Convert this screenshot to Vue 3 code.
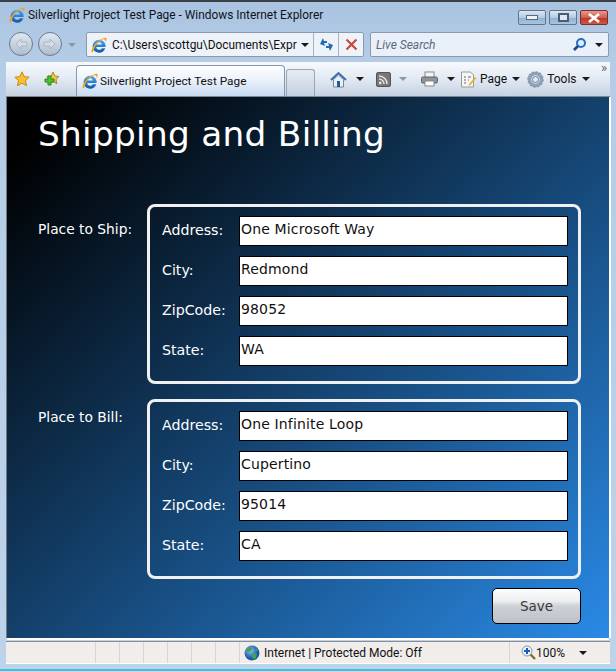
<script setup>
const groups = [
  { label: 'Place to Ship:', kind: 'ship', rows: [['Address:', 'One Microsoft Way'], ['City:', 'Redmond'], ['ZipCode:', '98052'], ['State:', 'WA']] },
  { label: 'Place to Bill:', kind: 'bill', rows: [['Address:', 'One Infinite Loop'], ['City:', 'Cupertino'], ['ZipCode:', '95014'], ['State:', 'CA']] },
]
const cells = [24, 24, 24, 24, 24, 24]
</script>

<template>
  <div class="window">
    <svg width="0" height="0" class="defs">
      <defs>
        <linearGradient id="ieblue" x1="0" y1="0" x2="0" y2="1"><stop offset="0" stop-color="#4aa8ee"/><stop offset="1" stop-color="#0c58b0"/></linearGradient>
        <symbol id="ie" viewBox="0 0 16 16">
          <path d="M14.600 10H5.200a3 3 0 0 0 5.600 1.300h3.500A6.500 6.500 0 1 1 14.600 8.500zM5.200 7.600h5.700a2.900 2.900 0 0 0-5.700 0z" fill="url(#ieblue)" fill-rule="evenodd"/>
          <path d="M.7 15.300C-.5 13.500 3 6.500 8.500 3.200 11.500 1.400 14.300.3 15.300 1.100c.7.600.4 2-.5 3.800-.3-1.300-1-2.300-2-2.800C8 4 3.200 9.500 2.800 13.500c-.8 1.500-1.600 2.200-2.100 1.800z" fill="#f2a21c"/>
        </symbol>
      </defs>
    </svg>

    <header class="titlebar">
      <svg class="ico16"><use href="#ie"/></svg>
      <span class="title">Silverlight Project Test Page - Windows Internet Explorer</span>
      <div class="winbtns">
        <button class="wb"><span class="min"></span></button>
        <button class="wb"><span class="max"></span></button>
        <button class="wb close">
          <svg width="14" height="10" viewBox="0 0 14 10"><path d="M2 1l10 8M12 1L2 9" stroke="#fff" stroke-width="2.600"/></svg>
        </button>
      </div>
    </header>

    <nav class="navrow">
      <div class="circle"><svg width="14" height="12" viewBox="0 0 14 12"><path d="M7 1L2 6l5 5V8h6V4H7z" fill="#d4dde8" stroke="#aab6c4"/></svg></div>
      <div class="circle second"><svg width="14" height="12" viewBox="0 0 14 12"><path d="M7 1l5 5-5 5V8H1V4h6z" fill="#d4dde8" stroke="#aab6c4"/></svg></div>
      <i class="tri grey navtri"></i>
      <div class="address">
        <svg class="ico16"><use href="#ie"/></svg>
        <span class="path">C:\Users\scottgu\Documents\Expr</span>
        <i class="tri"></i>
        <span class="seg first">
          <svg width="17" height="17" viewBox="0 0 17 17"><path d="M2 8l3-6 1 3h3v2H6l1 3zM15 9l-3 6-1-3H8v-2h3l-1-3z" fill="#2468b8"/></svg>
        </span>
        <span class="seg">
          <svg width="13" height="13" viewBox="0 0 13 13"><path d="M1.500 1.500l10 10M11.500 1.500l-10 10" stroke="#c8483c" stroke-width="2.200"/></svg>
        </span>
      </div>
      <div class="search">
        <span class="live">Live Search</span>
        <svg width="15" height="15" viewBox="0 0 15 15"><circle cx="9" cy="6" r="4" fill="#dcecfa" stroke="#2a6cc0" stroke-width="2"/><path d="M6 9l-4 4" stroke="#1c4a90" stroke-width="2.600"/></svg>
        <i class="tri searchtri"></i>
      </div>
    </nav>

    <div class="tabrow">
      <svg class="star" width="16" height="16" viewBox="0 0 16 16"><path d="M8 .8l2.200 4.800 5 .6-3.700 3.400 1 5.100L8 12.200l-4.500 2.500 1-5.100L.8 6.200l5-.6z" fill="#f8c030" stroke="#c88a18"/></svg>
      <svg class="star plus" width="16" height="16" viewBox="0 0 16 16"><path d="M9 1l1.800 4 4.200.5-3 2.900.8 4.300L9 10.500 5 12.700l.8-4.300-3-2.900L7.200 5z" fill="#f2c840" stroke="#b08a20"/><path d="M5 6v3H2v3h3v3h3v-3h3V9H8V6z" fill="#52c030" stroke="#2a8a18" transform="translate(-1 -1)"/></svg>
      <div class="tab">
        <svg class="ico16"><use href="#ie"/></svg>
        <span>Silverlight Project Test Page</span>
      </div>
      <div class="newtab"></div>
      <div class="tools">
        <svg class="t-home" width="17" height="17" viewBox="0 0 17 17"><path d="M1 9l7.500-7L16 9" fill="none" stroke="#3a6ea8" stroke-width="2"/><path d="M3.500 8.500L8.500 4l5 4.500V16h-10z" fill="#e8eef4" stroke="#7088a0"/><path d="M7 10h3v6H7z" fill="#2a5a94"/></svg>
        <i class="tri t-a1"></i>
        <svg class="t-rss" width="15" height="15" viewBox="0 0 15 15"><rect x=".5" y=".5" width="14" height="14" rx="1.500" fill="#77777a" stroke="#555"/><circle cx="4.200" cy="11" r="1.400" fill="#e4e4e4"/><path d="M3 7a5 5 0 0 1 5 5M3 4a8 8 0 0 1 8 8" fill="none" stroke="#e4e4e4" stroke-width="1.500"/></svg>
        <i class="tri grey t-a2"></i>
        <svg class="t-print" width="17" height="16" viewBox="0 0 17 16"><rect x="4" y="1" width="9" height="6" fill="#f4f4f4" stroke="#888"/><rect x=".5" y="6" width="16" height="6" rx="1.500" fill="#8c939b" stroke="#5c6268"/><rect x="4" y="10" width="9" height="5" fill="#fff" stroke="#888"/></svg>
        <i class="tri t-a3"></i>
        <svg class="t-page" width="17" height="17" viewBox="0 0 17 17"><path d="M1.500 1h9l3 3v12h-12z" fill="#f6f6f2" stroke="#9a9a94"/><path d="M4 6h2M4 9h2M4 12h2M8 6h3M8 9h1" stroke="#667" /><path d="M9 13l6-7 1.500 1-6 7-2 1z" fill="#e8b038"/></svg>
        <span class="t-label t-pagetext">Page</span>
        <i class="tri t-a4"></i>
        <svg class="t-gear" width="17" height="17" viewBox="0 0 17 17"><circle cx="8.500" cy="8.500" r="6" fill="none" stroke="#8ea2b8" stroke-width="3.500"/><circle cx="8.500" cy="8.500" r="7.300" fill="none" stroke="#8a9cb0" stroke-width="2" stroke-dasharray="2 1.800"/><circle cx="8.500" cy="8.500" r="3" fill="#dcecf8" stroke="#6a8098"/></svg>
        <span class="t-label t-toolstext">Tools</span>
        <i class="tri t-a5"></i>
        <span class="chev">»</span>
      </div>
    </div>

    <main class="page">
      <h1>Shipping and Billing</h1>
      <section v-for="g in groups" :key="g.label" class="group">
        <div class="grouplabel" :class="g.kind">{{ g.label }}</div>
        <div class="panel">
          <div v-for="r in g.rows" :key="r[0]" class="row">
            <label>{{ r[0] }}</label>
            <div class="input">{{ r[1] }}</div>
          </div>
        </div>
      </section>
      <div class="actions"><button class="save">Save</button></div>
    </main>

    <footer class="status">
      <div class="blank"></div>
      <div v-for="(w, i) in cells" :key="i" class="cell" :style="{ width: w + 'px' }"></div>
      <div class="zone">
        <svg width="16" height="16" viewBox="0 0 16 16"><defs><radialGradient id="gl" cx=".4" cy=".35"><stop offset="0" stop-color="#8cc0ec"/><stop offset="1" stop-color="#1c5aa8"/></radialGradient></defs><circle cx="8" cy="8" r="7.500" fill="url(#gl)"/><path d="M5 2l3 1-1 3-3 1-2-1zM9 8l4 1-1 4-3 1-1-3zM12 3l2 2-2 1z" fill="#3aa84a"/></svg>
        <span>Internet | Protected Mode: Off</span>
      </div>
      <div class="zoomzone">
        <svg width="15" height="15" viewBox="0 0 15 15"><path d="M9 9l5 5" stroke="#8a6a30" stroke-width="2.400"/><circle cx="6" cy="6" r="5" fill="#e8f0fa" stroke="#8a98a8"/><path d="M3 6h6M6 3v6" stroke="#1c5cc0" stroke-width="2"/></svg>
        <span>100%</span>
        <i class="tri"></i>
      </div>
    </footer>
    <div class="base"></div>
  </div>
</template>

<style scoped>
.window {
  width: 616px;
  height: 671px;
  overflow: hidden;
  display: flex;
  flex-direction: column;
  background: linear-gradient(#a9c3e0 0, #b5cce6 60px, #bcd3ea 100%);
  border-top: 2px solid #3a3f46;
  box-sizing: border-box;
  font-family: Roboto, "Noto Sans", sans-serif;
  color: #111;
}
.defs { position: absolute; }
.ico16 { width: 16px; height: 16px; flex: none; }
.tri {
  display: inline-block;
  flex: none;
  width: 0;
  height: 0;
  border-left: 4px solid transparent;
  border-right: 4px solid transparent;
  border-top: 4px solid #1a1a1a;
}
.tri.grey { border-top-color: #8d97a3; }

.titlebar {
  height: 28px;
  flex: none;
  display: flex;
  align-items: center;
  padding: 0 8px 3px 9px;
  box-sizing: border-box;
}
.title { margin-left: 3px; font-size: 11.900px; color: #10131a; }
.winbtns { margin-left: auto; display: flex; gap: 3px; margin-top: 6px; }
.wb {
  width: 28px;
  height: 15px;
  padding: 0;
  border: 1px solid #60748c;
  border-radius: 2px;
  background: linear-gradient(#dbe7f4 0, #b4cbe4 50%, #92b0d0 51%, #a8c4e0 100%);
  display: flex;
  align-items: center;
  justify-content: center;
}
.wb.close { background: linear-gradient(#e49a8c 0, #cf5f50 50%, #b83426 51%, #cc5a48 100%); border-color: #7c3028; }
.min { width: 10px; height: 3px; background: #eef2f6; border: 1px solid #5a6a7c; }
.max { width: 7px; height: 5px; border: 2px solid #4c5c6e; background: #dde7f2; }

.navrow {
  height: 32px;
  flex: none;
  display: flex;
  align-items: flex-start;
  padding: 2px 7px 0 9px;
  box-sizing: border-box;
}
.circle {
  width: 22px;
  height: 22px;
  border-radius: 50%;
  border: 1px solid #6a7a8c;
  background: linear-gradient(#dfe8f2, #aebdce);
  display: flex;
  align-items: center;
  justify-content: center;
}
.circle.second { margin-left: 5px; }
.navtri { margin: 11px 0 0 6px; }
.address {
  margin-left: 10px;
  width: 272px;
  height: 23px;
  display: flex;
  align-items: center;
  background: #eef3fa;
  border: 1px solid #8a9aac;
  border-radius: 2px;
  padding-left: 4px;
}
.path { margin-left: 5px; font-size: 11.900px; white-space: nowrap; width: 189px; }
.address .tri { margin-left: 1px; }
.seg {
  height: 23px;
  width: 24px;
  display: flex;
  align-items: center;
  justify-content: center;
  border-left: 1px solid #a4b2c2;
}
.seg.first { margin-left: 4px; }
.search {
  margin-left: 6px;
  flex: 1;
  height: 23px;
  display: flex;
  align-items: center;
  background: #e9f0f9;
  border: 1px solid #8a9aac;
  border-radius: 2px;
  padding-left: 5px;
  box-sizing: content-box;
}
.live { font-style: italic; font-size: 12px; color: #5a6a7a; margin-right: auto; }
.searchtri { margin: 0 5px 0 8px; }

.tabrow {
  height: 35px;
  margin: 0 6px;
  flex: none;
  display: flex;
  align-items: flex-end;
  background: linear-gradient(#f7fafd 0, #e4ebf4 45%, #c6d2e2 100%);
  border-bottom: 1px solid #7b8794;
  box-sizing: border-box;
  padding-left: 8px;
  position: relative;
}
.star { align-self: center; flex: none; }
.star.plus { margin-left: 14px; }
.tab {
  margin-left: 16px;
  width: 209px;
  height: 31px;
  box-sizing: border-box;
  display: flex;
  align-items: center;
  gap: 2px;
  padding-left: 5px;
  font-size: 11.800px;
  color: #111;
  background: linear-gradient(#fdfeff 0, #eef4fb 40%, #c8daf2 100%);
  border: 1px solid #8796a8;
  border-bottom: none;
  border-radius: 4px 4px 0 0;
}
.newtab {
  margin-left: 1px;
  width: 29px;
  height: 27px;
  box-sizing: border-box;
  border: 1px solid #9aa6b4;
  border-bottom: none;
  border-radius: 3px 3px 0 0;
  background: linear-gradient(#e6ecf4, #c4d0e0);
}
.tools {
  display: flex;
  flex: 1;
  align-items: center;
  align-self: stretch;
  position: relative;
  font-size: 12px;
}
.t-home { margin-left: 15px; }
.t-a1 { margin-left: 9px; }
.t-rss { margin-left: 12px; }
.t-a2 { margin-left: 8px; }
.t-print { margin-left: 14px; }
.t-a3 { margin-left: 9px; }
.t-page { margin-left: 5px; }
.t-pagetext { margin-left: 3px; }
.t-a4 { margin-left: 5px; }
.t-gear { margin-left: 7px; }
.t-toolstext { margin-left: 3px; }
.t-a5 { margin-left: 5px; }
.chev { position: absolute; right: 3px; top: -2px; font-size: 13px; color: #55606c; }

.page {
  margin: 0 7px 2px 7px;
  height: 541px;
  flex: none;
  box-sizing: border-box;
  background: linear-gradient(to bottom right, #000 0, #000 6%, #2a8ae6 100%);
  padding: 13px 28px 0 31px;
  color: #f6f6f6;
  font-family: "DejaVu Sans", sans-serif;
  box-shadow: -1px 0 0 #707880, 2px 0 0 #fff, 0 2px 0 #fff;
}
h1 {
  margin: 0 0 46px;
  font-size: 34.300px;
  line-height: 48px;
  font-weight: 400;
  letter-spacing: .3px;
  color: #fff;
}
.group {
  display: flex;
  margin-bottom: 15px;
}
.grouplabel {
  width: 109px;
  flex: none;
  font-size: 13.800px;
  line-height: 20px;
  color: #fff;
}
.grouplabel.ship { padding-top: 15px; }
.grouplabel.bill { padding-top: 8px; }
.panel {
  flex: 1;
  height: 180px;
  box-sizing: border-box;
  border: 3px solid #f0f0f0;
  border-radius: 8px;
  padding: 9px 10px 0 12px;
  display: flex;
  flex-direction: column;
  gap: 10px;
}
.row { display: flex; align-items: center; height: 30px; }
.row label { width: 77px; flex: none; font-size: 14.200px; padding-bottom: 2px; color: #fff; }
.input {
  flex: 1;
  height: 30px;
  box-sizing: border-box;
  background: #fff;
  border: 1px solid #000;
  color: #111;
  font-size: 14px;
  line-height: 24px;
  padding-left: 1px;
  letter-spacing: .15px;
}
.actions { display: flex; justify-content: flex-end; margin-top: -6px; }
.save {
  width: 89px;
  height: 36px;
  border: 1px solid #000;
  border-radius: 5px;
  font-family: "DejaVu Sans", sans-serif;
  font-size: 13.500px;
  color: #3a3a3a;
  background: linear-gradient(#fdfdfd 0, #eceef0 35%, #cdd2d6 50%, #bcc2c8 100%);
}

.status {
  height: 21px;
  flex: none;
  margin: 1px 6px 0;
  display: flex;
  align-items: center;
  background: #f0edeb;
  border-bottom: 1px solid #fff;
  border-top: 1px solid #8b8f94;
  font-size: 12px;
}
.blank { width: 89px; align-self: stretch; border-right: 1px solid #d8d6d4; }
.cell { box-sizing: border-box; align-self: stretch; border-right: 1px solid #d8d6d4; }
.zone { display: flex; align-items: center; gap: 4px; margin-left: 4px; width: 265px; align-self: stretch; border-right: 1px solid #d8d6d4; }
.zoomzone { display: flex; align-items: center; margin-left: 11px; font-size: 12px; flex: 1; padding-right: 23px; }
.zoomzone .tri { margin-left: auto; }
.base { flex: 1; border-bottom: 2px solid #28c8e8; }
</style>
